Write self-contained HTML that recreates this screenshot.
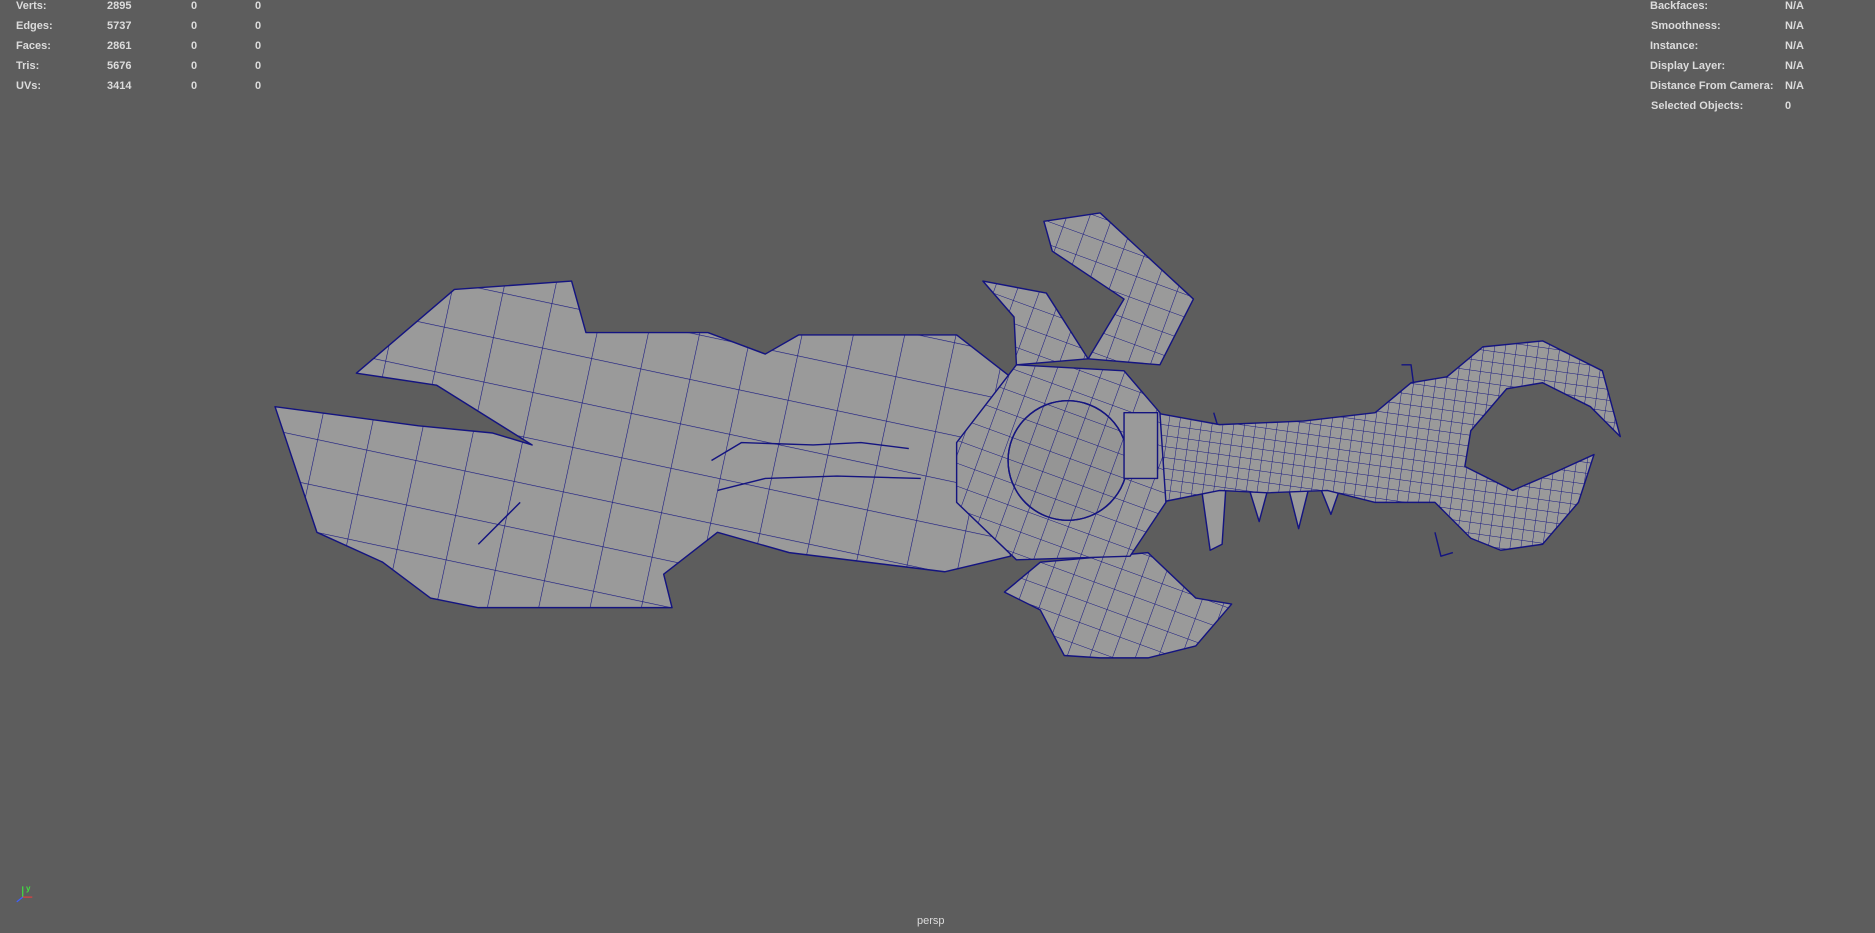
<!DOCTYPE html>
<html><head><meta charset="utf-8"><style>
html,body{margin:0;padding:0;}
body{width:1875px;height:933px;background:#5d5d5d;position:relative;overflow:hidden;font-family:"Liberation Sans",Arial,sans-serif;font-size:11px;font-weight:bold;color:#dcdcdc;}
.t{position:absolute;white-space:nowrap;line-height:12px;}
svg{position:absolute;left:0;top:0;}
</style></head><body>
<svg width="1875" height="933" viewBox="0 0 1568 780" preserveAspectRatio="none">
<defs>
<pattern id="pb" width="42" height="38" patternUnits="userSpaceOnUse" patternTransform="rotate(12)">
<path d="M0 0H42M0 0V38" stroke="#161680" stroke-width="1" fill="none"/>
</pattern>
<pattern id="pg" width="18" height="18" patternUnits="userSpaceOnUse" patternTransform="rotate(20)">
<path d="M0 0H18M0 0V18" stroke="#161680" stroke-width="0.9" fill="none"/>
</pattern>
<pattern id="ph" width="9" height="9" patternUnits="userSpaceOnUse" patternTransform="rotate(8)">
<path d="M0 0H9M0 0V9" stroke="#161680" stroke-width="0.8" fill="none"/>
</pattern>
</defs>
<g stroke="#141480" stroke-width="1.2" stroke-linejoin="round">
<!-- blade -->
<polygon fill="#9a9a9a" points="298,312 380,242 478,235 490,278 592,278 640,296 668,280 800,280 845,315 845,465 790,478 660,462 600,445 555,480 562,508 400,508 360,500 320,470 265,445 230,340 350,356 412,362 445,372 365,322"/>
<polygon fill="url(#pb)" stroke="none" points="298,312 380,242 478,235 490,278 592,278 640,296 668,280 800,280 845,315 845,465 790,478 660,462 600,445 555,480 562,508 400,508 360,500 320,470 265,445 230,340 350,356 412,362 445,372 365,322"/>
<polyline fill="none" points="400,455 435,420"/>
<polyline fill="none" points="595,385 620,370 680,372 720,370 760,375"/>
<polyline fill="none" points="600,410 640,400 700,398 770,400"/>
<!-- horns top -->
<polygon fill="#9a9a9a" points="873,185 920,178 998,250 970,305 910,300 940,250 880,210"/>
<polygon fill="url(#pg)" stroke="none" points="873,185 920,178 998,250 970,305 910,300 940,250 880,210"/>
<polygon fill="#9a9a9a" points="822,235 875,245 910,300 850,305 848,265"/>
<polygon fill="url(#pg)" stroke="none" points="822,235 875,245 910,300 850,305 848,265"/>
<!-- bottom horn -->
<polygon fill="#9a9a9a" points="840,495 870,470 960,462 1000,500 1030,505 1000,540 960,550 920,550 890,548 870,510"/>
<polygon fill="url(#pg)" stroke="none" points="840,495 870,470 960,462 1000,500 1030,505 1000,540 960,550 920,550 890,548 870,510"/>
<!-- handle -->
<polygon fill="#9a9a9a" points="1005,410 1012,460 1022,455 1025,410"/>
<polygon fill="#9a9a9a" points="1045,410 1053,436 1060,410"/>
<polygon fill="#9a9a9a" points="1078,410 1086,442 1094,410"/>
<polygon fill="#9a9a9a" points="1105,410 1113,430 1120,410"/>
<polygon fill="#9a9a9a" points="965,345 1020,355 1090,352 1150,345 1180,320 1210,315 1240,290 1290,285 1340,310 1355,365 1330,340 1290,320 1260,325 1230,360 1225,390 1265,410 1300,395 1333,380 1320,420 1290,455 1255,460 1230,450 1200,420 1150,420 1110,410 1060,412 1020,410 970,420"/>
<polygon fill="url(#ph)" stroke="none" points="965,345 1020,355 1090,352 1150,345 1180,320 1210,315 1240,290 1290,285 1340,310 1355,365 1330,340 1290,320 1260,325 1230,360 1225,390 1265,410 1300,395 1333,380 1320,420 1290,455 1255,460 1230,450 1200,420 1150,420 1110,410 1060,412 1020,410 970,420"/>
<polyline fill="none" points="1172,305 1180,305 1182,320"/>
<polyline fill="none" points="1200,445 1205,465 1215,462"/>
<polyline fill="none" points="1015,345 1018,355"/>
<!-- guard -->
<polygon fill="#9a9a9a" points="850,305 940,310 970,345 975,420 945,465 850,468 800,420 800,370"/>
<polygon fill="url(#pg)" stroke="none" points="850,305 940,310 970,345 975,420 945,465 850,468 800,420 800,370"/>
<circle cx="893" cy="385" r="50" fill="#959595"/>
<circle cx="893" cy="385" r="50" fill="url(#pg)" stroke="none"/>
<circle cx="893" cy="385" r="50" fill="none"/>
<rect x="940" y="345" width="28" height="55" fill="#9a9a9a"/>
</g>
<!-- axis -->
<line x1="19" y1="750" x2="19" y2="741" stroke="#40e040" stroke-width="1"/>
<line x1="19" y1="750" x2="27" y2="750" stroke="#e04040" stroke-width="1"/>
<line x1="19" y1="750" x2="14" y2="754" stroke="#4060ff" stroke-width="1"/>
</svg>
<div class="t" style="left:16px;top:0px">Verts:</div><div class="t" style="left:107px;top:0px">2895</div><div class="t" style="left:191px;top:0px">0</div><div class="t" style="left:255px;top:0px">0</div>
<div class="t" style="left:16px;top:20px">Edges:</div><div class="t" style="left:107px;top:20px">5737</div><div class="t" style="left:191px;top:20px">0</div><div class="t" style="left:255px;top:20px">0</div>
<div class="t" style="left:16px;top:40px">Faces:</div><div class="t" style="left:107px;top:40px">2861</div><div class="t" style="left:191px;top:40px">0</div><div class="t" style="left:255px;top:40px">0</div>
<div class="t" style="left:16px;top:60px">Tris:</div><div class="t" style="left:107px;top:60px">5676</div><div class="t" style="left:191px;top:60px">0</div><div class="t" style="left:255px;top:60px">0</div>
<div class="t" style="left:16px;top:80px">UVs:</div><div class="t" style="left:107px;top:80px">3414</div><div class="t" style="left:191px;top:80px">0</div><div class="t" style="left:255px;top:80px">0</div>
<div class="t" style="left:1650px;top:0px">Backfaces:</div><div class="t" style="left:1785px;top:0px">N/A</div>
<div class="t" style="left:1651px;top:20px">Smoothness:</div><div class="t" style="left:1785px;top:20px">N/A</div>
<div class="t" style="left:1650px;top:40px">Instance:</div><div class="t" style="left:1785px;top:40px">N/A</div>
<div class="t" style="left:1650px;top:60px">Display Layer:</div><div class="t" style="left:1785px;top:60px">N/A</div>
<div class="t" style="left:1650px;top:80px">Distance From Camera:</div><div class="t" style="left:1785px;top:80px">N/A</div>
<div class="t" style="left:1651px;top:100px">Selected Objects:</div><div class="t" style="left:1785px;top:100px">0</div>
<div class="t" style="left:917px;top:915px;font-weight:normal">persp</div>
<div class="t" style="left:26px;top:883px;font-size:8px;color:#40e040">y</div>
</body></html>
